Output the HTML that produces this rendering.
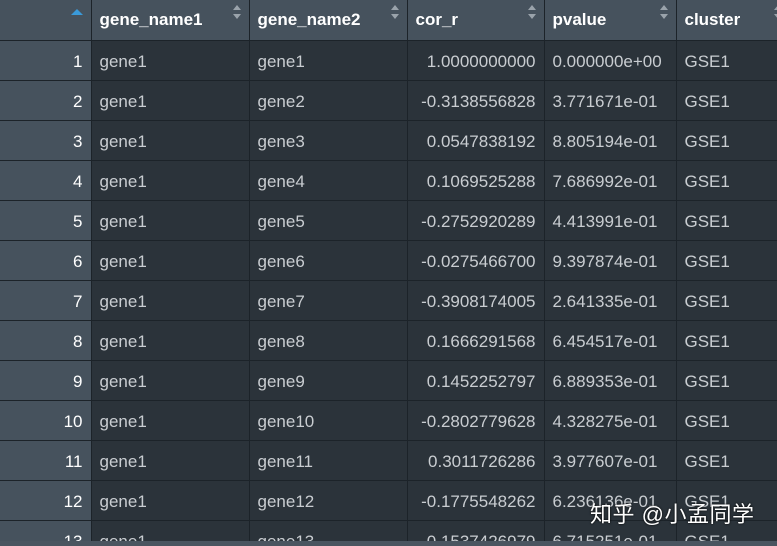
<!DOCTYPE html>
<html style="height:546px;overflow:hidden"><head><meta charset="utf-8"><style>
html,body{margin:0;width:777px;height:546px;overflow:hidden}
body{background:#2b333a;font-family:"Liberation Sans","Noto Sans CJK SC",sans-serif;position:relative}
.wrap{position:absolute;left:0;top:0;width:777px;height:541px;overflow:hidden}
table{border-collapse:collapse;table-layout:fixed;position:absolute;top:0;left:0;width:790px}
td,th{height:40px;border-right:1px solid #1c2329;border-bottom:1px solid #1c2329;padding:3px 8px 0;font-size:17px;color:#c9cdd1;white-space:nowrap;overflow:hidden;box-sizing:border-box}
th{background:#46525d;color:#fff;font-weight:bold;text-align:left;height:40px;position:relative;padding-top:0}
td.i{background:#46525d;text-align:right;color:#fff}
td.r{text-align:right}
.s{position:absolute;right:8px;top:5px;width:8px;height:16px}
.s:before{content:"";position:absolute;left:0;top:0;border-left:4px solid transparent;border-right:4px solid transparent;border-bottom:5px solid #9aa3ab}
.s:after{content:"";position:absolute;left:0;top:9px;border-left:4px solid transparent;border-right:4px solid transparent;border-top:5px solid #9aa3ab}
.up{position:absolute;right:8px;top:9px;border-left:6px solid transparent;border-right:6px solid transparent;border-bottom:6px solid #3a9ad9}
.bar{position:absolute;left:0;top:541px;width:777px;height:5px;background:#4a5560}
.wm{position:absolute;left:590px;top:497px;font-size:22px;color:#fff;text-shadow:0 0 2px #000;letter-spacing:0.5px}
</style></head><body>
<div class="wrap">
<table>
<colgroup><col style="width:91px"><col style="width:158px"><col style="width:158px"><col style="width:137px"><col style="width:132px"><col style="width:114px"></colgroup>
<tr><th><span class="up"></span></th><th>gene_name1<span class="s"></span></th><th>gene_name2<span class="s"></span></th><th>cor_r<span class="s"></span></th><th>pvalue<span class="s"></span></th><th>cluster<span class="s"></span></th></tr>
<tr><td class="i">1</td><td>gene1</td><td>gene1</td><td class="r">1.0000000000</td><td>0.000000e+00</td><td>GSE1</td></tr>
<tr><td class="i">2</td><td>gene1</td><td>gene2</td><td class="r">-0.3138556828</td><td>3.771671e-01</td><td>GSE1</td></tr>
<tr><td class="i">3</td><td>gene1</td><td>gene3</td><td class="r">0.0547838192</td><td>8.805194e-01</td><td>GSE1</td></tr>
<tr><td class="i">4</td><td>gene1</td><td>gene4</td><td class="r">0.1069525288</td><td>7.686992e-01</td><td>GSE1</td></tr>
<tr><td class="i">5</td><td>gene1</td><td>gene5</td><td class="r">-0.2752920289</td><td>4.413991e-01</td><td>GSE1</td></tr>
<tr><td class="i">6</td><td>gene1</td><td>gene6</td><td class="r">-0.0275466700</td><td>9.397874e-01</td><td>GSE1</td></tr>
<tr><td class="i">7</td><td>gene1</td><td>gene7</td><td class="r">-0.3908174005</td><td>2.641335e-01</td><td>GSE1</td></tr>
<tr><td class="i">8</td><td>gene1</td><td>gene8</td><td class="r">0.1666291568</td><td>6.454517e-01</td><td>GSE1</td></tr>
<tr><td class="i">9</td><td>gene1</td><td>gene9</td><td class="r">0.1452252797</td><td>6.889353e-01</td><td>GSE1</td></tr>
<tr><td class="i">10</td><td>gene1</td><td>gene10</td><td class="r">-0.2802779628</td><td>4.328275e-01</td><td>GSE1</td></tr>
<tr><td class="i">11</td><td>gene1</td><td>gene11</td><td class="r">0.3011726286</td><td>3.977607e-01</td><td>GSE1</td></tr>
<tr><td class="i">12</td><td>gene1</td><td>gene12</td><td class="r">-0.1775548262</td><td>6.236136e-01</td><td>GSE1</td></tr>
<tr><td class="i">13</td><td>gene1</td><td>gene13</td><td class="r">-0.1537426979</td><td>6.715251e-01</td><td>GSE1</td></tr>
</table>
</div>
<div class="bar"></div>
<div class="wm">知乎 @小孟同学</div>
</body></html>
